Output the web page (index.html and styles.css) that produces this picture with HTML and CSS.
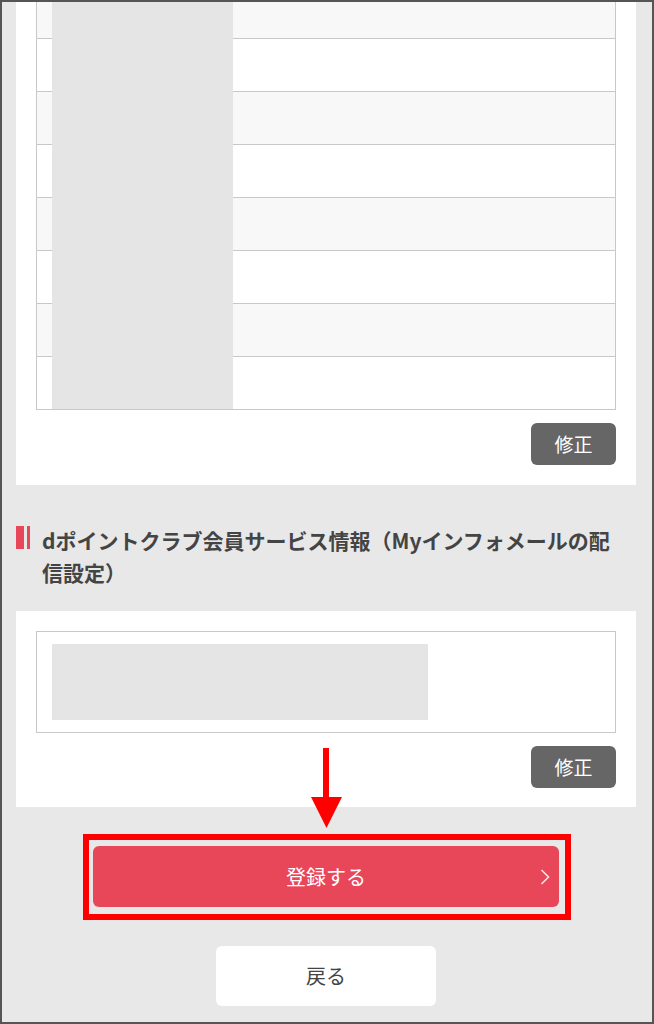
FILE: index.html
```html
<!DOCTYPE html>
<html lang="ja">
<head>
    <meta charset="UTF-8">
    <title>登録内容の確認</title>
    <link rel="stylesheet" href="styles.css">
</head>
<body>

    <div class="frame">

        <div class="card">
            <div class="info-table-wrap">
                <table class="info-table">
                    <tr class="row-top"><th></th><td></td></tr>
                    <tr><th></th><td></td></tr>
                    <tr><th></th><td></td></tr>
                    <tr><th></th><td></td></tr>
                    <tr><th></th><td></td></tr>
                    <tr><th></th><td></td></tr>
                    <tr><th></th><td></td></tr>
                    <tr><th></th><td></td></tr>
                </table>
                <!-- 項目名は伏せてある -->
                <div class="mask"></div>
            </div>
            <div class="edit-row">
                <button class="edit-button">修正</button>
            </div>
        </div>

        <h2 class="section-title">dポイントクラブ会員サービス情報（Myインフォメールの配信設定）</h2>

        <div class="card">
            <div class="mail-box">
                <div class="mail-mask"></div>
            </div>
            <div class="edit-row">
                <button class="edit-button">修正</button>
            </div>
        </div>

        <div class="highlight">
            <button class="submit-button">
                登録する
                <svg class="chevron" width="10" height="16" viewBox="0 0 10 16">
                    <polyline points="1.5,1 8.5,8 1.5,15" fill="none" stroke="#fff" stroke-width="1.6" stroke-opacity="0.85"/>
                </svg>
            </button>
        </div>

        <button class="back-button">戻る</button>

        <!-- 注目用の矢印 -->
        <svg class="arrow" width="32" height="80" viewBox="0 0 32 80">
            <rect x="12" y="0" width="6" height="51" fill="#ff0000"/>
            <polygon points="0,49 31,49 15.5,80" fill="#ff0000"/>
        </svg>

    </div>

</body>
</html>
```

FILE: styles.css
```css
* {
    box-sizing: border-box;
}
body {
    margin: 0;
    font-family: "Noto Sans CJK JP", "Noto Sans", sans-serif;
}
.frame {
    position: relative;
    width: 654px;
    height: 1024px;
    overflow: hidden;
    border: 2px solid #555;
    background-color: #e8e8e8;
}
.card {
    margin: 0 16px 0 14px;
    padding: 0 20px 20px;
    background-color: #fff;
}
.card + .section-title + .card {
    padding-top: 20px;
    padding-bottom: 19px;
}
.info-table-wrap {
    position: relative;
}
.info-table {
    width: 100%;
    border-collapse: collapse;
    border-left: 1px solid #c8c8c8;
    border-right: 1px solid #c8c8c8;
}
.info-table tr {
    height: 53px;
    border-bottom: 1px solid #c8c8c8;
}
.info-table tr:nth-child(odd) {
    background-color: #f8f8f8;
}
.info-table tr.row-top {
    height: 36px;
}
.info-table th {
    width: 196px;
    padding: 0;
}
.info-table td {
    padding: 0;
}
.mask {
    position: absolute;
    top: 0;
    bottom: 1px;
    left: 16px;
    width: 181px;
    background-color: #e5e5e5;
}
.edit-row {
    display: flex;
    justify-content: flex-end;
    margin-top: 13px;
}
.edit-button {
    width: 85px;
    height: 42px;
    border: none;
    border-radius: 6px;
    background-color: #666;
    color: #fff;
    font-family: inherit;
    font-size: 19px;
    padding: 0;
}
.section-title {
    position: relative;
    margin: 39px 28px 23px 14px;
    padding-left: 26px;
    font-size: 21px;
    font-weight: bold;
    line-height: 32px;
    color: #444;
}
.section-title::before {
    content: "";
    position: absolute;
    left: 0;
    top: 2px;
    width: 14px;
    height: 23px;
    background: linear-gradient(to right, #e8475a 0 8px, transparent 8px 11px, #e8475a 11px 14px);
}
.mail-box {
    height: 102px;
    padding: 12px 15px;
    border: 1px solid #c8c8c8;
}
.mail-mask {
    width: 376px;
    height: 76px;
    background-color: #e5e5e5;
}
.highlight {
    width: 488px;
    margin: 27px 0 0 81px;
    padding: 6px 6px 7px 4px;
    border: 6px solid #ff0000;
}
.submit-button {
    position: relative;
    display: block;
    width: 100%;
    height: 61px;
    border: none;
    border-radius: 6px;
    background-color: #e8475a;
    color: #fff;
    font-family: inherit;
    font-size: 20px;
    padding: 0;
}
.chevron {
    position: absolute;
    right: 9px;
    top: 23px;
}
.back-button {
    display: block;
    width: 220px;
    height: 60px;
    margin: 26px 0 0 214px;
    border: none;
    border-radius: 6px;
    background-color: #fff;
    color: #444;
    font-family: inherit;
    font-size: 20px;
    padding: 0;
}
.arrow {
    position: absolute;
    left: 309px;
    top: 746px;
}
```
